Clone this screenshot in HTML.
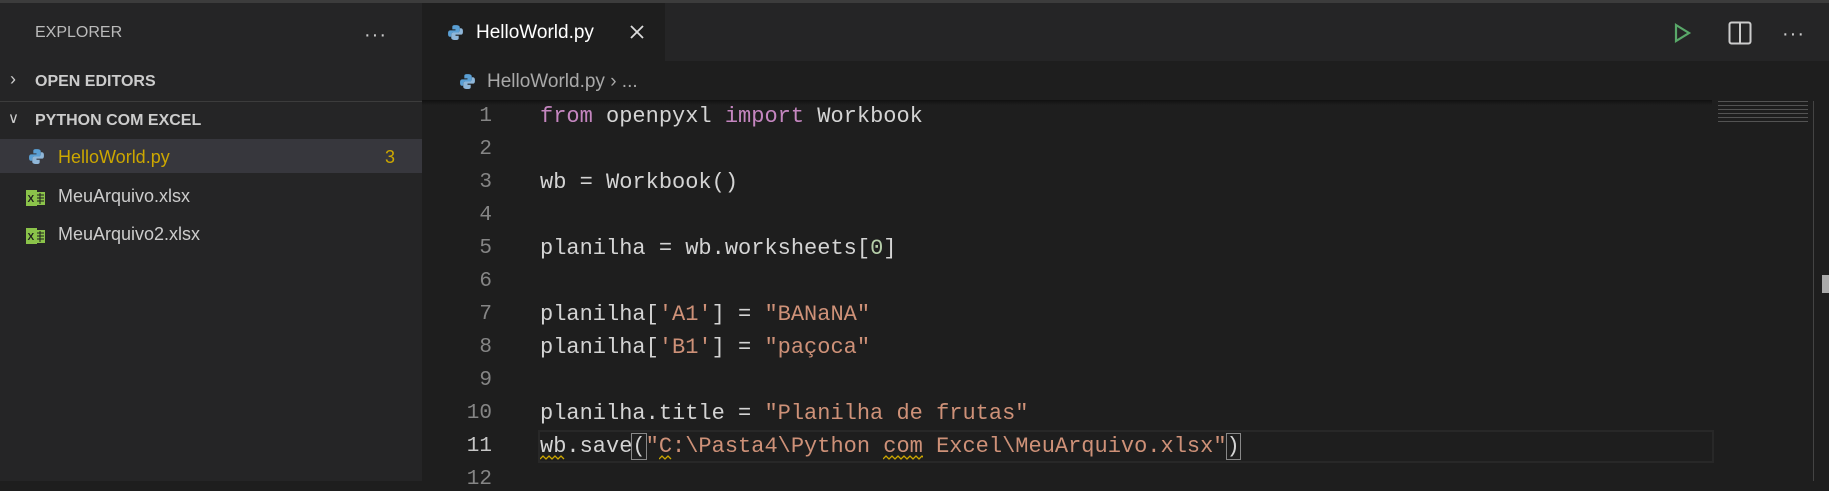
<!DOCTYPE html>
<html><head><meta charset="utf-8"><style>
*{margin:0;padding:0;box-sizing:border-box}
body{width:1829px;height:481px;background:#1e1e1e;overflow:hidden;position:relative;font-family:"Liberation Sans",sans-serif;color:#ccc}
.top{position:absolute;left:0;top:0;width:1829px;height:3px;background:#3c3c3c}
.side{position:absolute;left:0;top:3px;width:422px;height:478px;background:#252526}
.abs{position:absolute;white-space:nowrap}
.tabbar{position:absolute;left:422px;top:3px;width:1407px;height:58px;background:#252526}
.tab{position:absolute;left:422px;top:3px;width:243px;height:58px;background:#1e1e1e}
.code{position:absolute;left:540px;font-family:"Liberation Mono",monospace;font-size:22px;color:#d4d4d4;white-space:pre}
.ln{position:absolute;width:70px;left:422px;text-align:right;font-family:"Liberation Mono",monospace;font-size:21px;color:#858585}
.k{color:#c586c0}.s{color:#ce9178}.n{color:#b5cea8}
.row{position:absolute;left:0;width:422px;height:34px}
.sq{position:absolute;top:455px;height:5px}
</style></head><body>
<div class="top"></div>
<div class="side">
<div class="abs" style="left:35px;top:21px;font-size:16px;color:#bbb">EXPLORER</div>
<div class="abs" style="left:364px;top:21px;font-size:20px;color:#ccc;letter-spacing:1px">···</div>
<div class="abs" style="left:10px;top:66px;font-size:18px;color:#ccc">&#x203A;</div>
<div class="abs" style="left:35px;top:70px;font-size:16px;font-weight:bold;color:#ccc">OPEN EDITORS</div>
<div style="position:absolute;left:0;top:98px;width:422px;height:1px;background:#3c3c3c"></div>
<div class="abs" style="left:8px;top:106px;font-size:15px;color:#ccc">&#x2228;</div>
<div class="abs" style="left:35px;top:109px;font-size:16px;font-weight:bold;color:#ccc">PYTHON COM EXCEL</div>
<div class="row" style="top:136px;background:#37373d"></div>
<svg class="abs" style="left:28px;top:145px" width="17" height="17" viewBox="0 0 16 16"><path d="M8 1c-3 0-3 1-3 2v2h3v1H3C1 6 1 8 1 9s0 3 2 3h1v-2c0-1 1-2 2-2h4c1 0 2-1 2-2V3c0-1-1-2-4-2z" fill="#5a9fd4"/><path d="M8 15c3 0 3-1 3-2v-2H8v-1h5c2 0 2-2 2-3s0-3-2-3h-1v2c0 1-1 2-2 2H6c-1 0-2 1-2 2v3c0 1 1 2 4 2z" fill="#8fb6d8"/></svg>
<div class="abs" style="left:58px;top:144px;font-size:18px;color:#cca700">HelloWorld.py</div>
<div class="abs" style="left:385px;top:144px;font-size:18px;color:#cca700">3</div>
<svg class="abs" style="left:26px;top:186px" width="20" height="18" viewBox="0 0 20 18"><rect x="0" y="1" width="11" height="16" fill="#8bc34a"/><rect x="9" y="3" width="10" height="13" fill="#8bc34a"/><text x="1.5" y="13" font-size="10" font-family="Liberation Sans" fill="#1e1e1e" font-weight="bold">X</text><path d="M11 6h7M11 9h7M11 12h7M14 4v11" stroke="#1e1e1e" stroke-width="1"/></svg>
<div class="abs" style="left:58px;top:183px;font-size:18px;color:#ccc">MeuArquivo.xlsx</div>
<svg class="abs" style="left:26px;top:224px" width="20" height="18" viewBox="0 0 20 18"><rect x="0" y="1" width="11" height="16" fill="#8bc34a"/><rect x="9" y="3" width="10" height="13" fill="#8bc34a"/><text x="1.5" y="13" font-size="10" font-family="Liberation Sans" fill="#1e1e1e" font-weight="bold">X</text><path d="M11 6h7M11 9h7M11 12h7M14 4v11" stroke="#1e1e1e" stroke-width="1"/></svg>
<div class="abs" style="left:58px;top:221px;font-size:18px;color:#ccc">MeuArquivo2.xlsx</div>
</div>
<div class="tabbar"></div>
<div class="tab"></div>
<svg class="abs" style="left:447px;top:24px" width="17" height="17" viewBox="0 0 16 16"><path d="M8 1c-3 0-3 1-3 2v2h3v1H3C1 6 1 8 1 9s0 3 2 3h1v-2c0-1 1-2 2-2h4c1 0 2-1 2-2V3c0-1-1-2-4-2z" fill="#5a9fd4"/><path d="M8 15c3 0 3-1 3-2v-2H8v-1h5c2 0 2-2 2-3s0-3-2-3h-1v2c0 1-1 2-2 2H6c-1 0-2 1-2 2v3c0 1 1 2 4 2z" fill="#8fb6d8"/></svg>
<div class="abs" style="left:476px;top:22px;font-size:19px;color:#fff">HelloWorld.py</div>
<svg class="abs" style="left:629px;top:24px" width="16" height="16"><path d="M2 2L14 14M14 2L2 14" stroke="#ddd" stroke-width="1.8"/></svg>
<svg class="abs" style="left:1672px;top:22px" width="20" height="22"><path d="M4 3L17 11L4 19Z" fill="none" stroke="#59a869" stroke-width="2.2"/></svg>
<svg class="abs" style="left:1728px;top:21px" width="24" height="24"><rect x="1.5" y="1.5" width="21" height="21" rx="2" fill="none" stroke="#ccc" stroke-width="2"/><path d="M12 2v20" stroke="#ccc" stroke-width="2"/></svg>
<div class="abs" style="left:1782px;top:23px;font-size:20px;color:#ccc;letter-spacing:1px">···</div>
<svg class="abs" style="left:459px;top:73px" width="17" height="17" viewBox="0 0 16 16"><path d="M8 1c-3 0-3 1-3 2v2h3v1H3C1 6 1 8 1 9s0 3 2 3h1v-2c0-1 1-2 2-2h4c1 0 2-1 2-2V3c0-1-1-2-4-2z" fill="#5a9fd4"/><path d="M8 15c3 0 3-1 3-2v-2H8v-1h5c2 0 2-2 2-3s0-3-2-3h-1v2c0 1-1 2-2 2H6c-1 0-2 1-2 2v3c0 1 1 2 4 2z" fill="#8fb6d8"/></svg>
<div class="abs" style="left:487px;top:71px;font-size:19px;color:#a9a9a9">HelloWorld.py &#x203A; ...</div>
<div style="position:absolute;left:422px;top:100px;width:1290px;height:5px;background:linear-gradient(#111,#1e1e1e)"></div>
<div style="position:absolute;left:538px;top:430px;width:1176px;height:33px;border:2px solid #282828"></div>
<div style="position:absolute;left:1813px;top:101px;width:1px;height:380px;background:#444"></div>
<div style="position:absolute;left:1822px;top:275px;width:7px;height:18px;background:#aaa"></div>
<div style="position:absolute;left:1718px;top:101px;width:90px;height:22px;opacity:.5;background:repeating-linear-gradient(#888 0 1px,transparent 1px 4px)"></div>
<div class="ln" style="top:105px">1</div><div class="code" style="top:104px"><span class="k">from</span> openpyxl <span class="k">import</span> Workbook</div>
<div class="ln" style="top:138px">2</div>
<div class="ln" style="top:171px">3</div><div class="code" style="top:170px">wb = Workbook()</div>
<div class="ln" style="top:204px">4</div>
<div class="ln" style="top:237px">5</div><div class="code" style="top:236px">planilha = wb.worksheets[<span class="n">0</span>]</div>
<div class="ln" style="top:270px">6</div>
<div class="ln" style="top:303px">7</div><div class="code" style="top:302px">planilha[<span class="s">'A1'</span>] = <span class="s">"BANaNA"</span></div>
<div class="ln" style="top:336px">8</div><div class="code" style="top:335px">planilha[<span class="s">'B1'</span>] = <span class="s">"paçoca"</span></div>
<div class="ln" style="top:369px">9</div>
<div class="ln" style="top:402px">10</div><div class="code" style="top:401px">planilha.title = <span class="s">"Planilha de frutas"</span></div>
<div class="ln" style="top:435px;color:#c6c6c6">11</div><div class="code" style="top:434px">wb.save<span style="outline:1px solid #888">(</span><span class="s">"C:\Pasta4\Python com Excel\MeuArquivo.xlsx"</span><span style="outline:1px solid #888">)</span></div>
<svg class="sq" style="left:540px" width="26" height="5"><path d="M0 4l3-3 3 3 3-3 3 3 3-3 3 3 3-3 3 3" fill="none" stroke="#cca700" stroke-width="1.3"/></svg>
<svg class="sq" style="left:659px" width="13" height="5"><path d="M0 4l3-3 3 3 3-3 3 3" fill="none" stroke="#cca700" stroke-width="1.3"/></svg>
<svg class="sq" style="left:883px" width="40" height="5"><path d="M0 4l3-3 3 3 3-3 3 3 3-3 3 3 3-3 3 3 3-3 3 3 3-3 3 3 3-3 3 3" fill="none" stroke="#cca700" stroke-width="1.3"/></svg>
<div class="ln" style="top:468px">12</div>
</body></html>
